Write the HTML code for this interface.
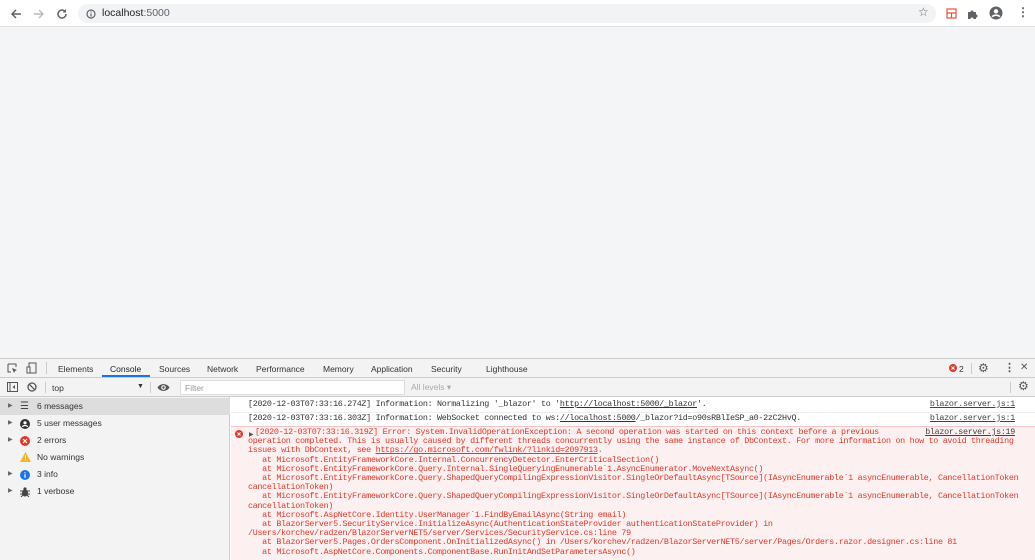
<!DOCTYPE html>
<html><head><style>
*{margin:0;padding:0;box-sizing:border-box}
body{width:1035px;height:559px;overflow:hidden;background:#f4f5f7;font-family:"Liberation Sans",sans-serif;position:relative}
.abs{position:absolute}
.top{left:0;top:0;width:1035px;height:27px;background:#fff;border-bottom:1px solid #e0e0e0}
.pill{left:78px;top:4px;width:858px;height:19px;background:#f1f3f4;border-radius:10px}
.dt{left:0;top:358px;width:1035px;height:201px;background:#fff;border-top:1px solid #ccc}
.tabs{left:0;top:0;width:1035px;height:19px;background:#f3f3f3;border-bottom:1px solid #ccc;font-size:8.5px;color:#333}
.tabs span{position:absolute;top:5px}
.tb{left:0;top:19px;width:1035px;height:19px;background:#f3f3f3;border-bottom:1px solid #ccc;font-size:8.5px;color:#333}
.side{left:0;top:38px;width:230px;height:163px;background:#f3f3f3;border-right:1px solid #ccc;font-size:8.5px;color:#333}
.side div{position:absolute;left:0;width:230px;height:17px;line-height:17px}
.side .t{position:absolute;left:8px;font-size:6px;color:#666}
.side .l{position:absolute;left:37px}
.mono{font-family:"Liberation Mono",monospace;font-size:8.4px;letter-spacing:-0.3px;white-space:pre;line-height:9.2px}
.row{position:absolute;left:231px;width:804px;border-bottom:1px solid #eee}
.err{background:#fdf0f0;color:#e0392b;border-top:1px solid #f6c5c5}
u{text-decoration:underline}
.src{position:absolute;right:20px;color:#444;text-indent:0}
</style></head><body>
<div class="abs top">
 <svg class="abs" style="left:10px;top:8px" width="12" height="12" viewBox="0 0 12 12"><path d="M11 6H2M6 2L2 6l4 4" stroke="#5f6368" stroke-width="1.5" fill="none"/></svg>
 <svg class="abs" style="left:33px;top:8px" width="12" height="12" viewBox="0 0 12 12"><path d="M1 6h9M6 2l4 4-4 4" stroke="#bbb" stroke-width="1.4" fill="none"/></svg>
 <svg class="abs" style="left:56px;top:8px" width="12" height="12" viewBox="0 0 12 12"><path d="M10 6a4 4 0 1 1-1.2-2.8" stroke="#5f6368" stroke-width="1.5" fill="none"/><path d="M10 1v3.5H6.5z" fill="#5f6368"/></svg>
</div>
<div class="abs pill">
 <svg class="abs" style="left:8px;top:5px" width="10" height="10" viewBox="0 0 10 10"><circle cx="5" cy="5" r="4" stroke="#5f6368" stroke-width="1.2" fill="none"/><path d="M5 4.5v3M5 2.5v1" stroke="#5f6368" stroke-width="1.2"/></svg>
 <span class="abs" style="left:24px;top:3px;font-size:10.5px;color:#202124">localhost<span style="color:#5f6368">:5000</span></span>
 <span class="abs" style="left:840px;top:1px;font-size:12px;color:#5f6368">☆</span>
</div>
<svg class="abs" style="left:946px;top:8px" width="11" height="11" viewBox="0 0 11 11"><rect x="1" y="1" width="9" height="9" stroke="#e8543b" stroke-width="1.2" fill="none"/><path d="M1 5h9M5.5 5v5" stroke="#e8543b" stroke-width="1.2"/></svg>
<svg class="abs" style="left:967px;top:8px" width="12" height="12" viewBox="0 0 12 12"><path d="M1 4h2.5a1.5 1.5 0 0 1 3 0H9v2.5a1.5 1.5 0 0 1 0 3V11H6.5a1.5 1.5 0 0 0-3 0H1z" fill="#5f6368"/></svg>
<svg class="abs" style="left:989px;top:6px" width="14" height="14" viewBox="0 0 14 14"><circle cx="7" cy="7" r="6.5" fill="#5f6368"/><circle cx="7" cy="5.3" r="2.2" fill="#fff"/><path d="M3.2 10.8c1.5-2.2 6.1-2.2 7.6 0" stroke="#fff" stroke-width="1.6" fill="none"/></svg>
<span class="abs" style="left:1017px;top:5px;font-size:12px;color:#5f6368;font-weight:bold">⋮</span>

<div class="abs dt">
 <div class="abs tabs">
  <svg class="abs" style="left:7px;top:4px" width="11" height="11" viewBox="0 0 11 11"><path d="M1 1h8v3M1 1v8h3" stroke="#555" fill="none"/><path d="M5 5l5 2-2 1-1 2z" fill="#555"/></svg>
  <svg class="abs" style="left:26px;top:3px" width="11" height="12" viewBox="0 0 11 12"><rect x="3" y="1" width="7" height="10" stroke="#555" fill="none"/><rect x="1" y="5" width="3" height="6" stroke="#555" fill="#fff"/></svg>
  <div class="abs" style="left:46px;top:3px;width:1px;height:12px;background:#ccc"></div>
  <span style="left:58px">Elements</span>
  <span style="left:110px;color:#222">Console</span>
  <div class="abs" style="left:102px;top:16px;width:48px;height:2px;background:#1a73e8"></div>
  <span style="left:159px">Sources</span>
  <span style="left:207px">Network</span>
  <span style="left:256px">Performance</span>
  <span style="left:323px">Memory</span>
  <span style="left:371px">Application</span>
  <span style="left:431px">Security</span>
  <span style="left:486px">Lighthouse</span>
  <svg class="abs" style="left:949px;top:5px" width="8" height="8" viewBox="0 0 8 8"><circle cx="4" cy="4" r="4" fill="#e0392b"/><path d="M2.5 2.5l3 3M5.5 2.5l-3 3" stroke="#fff" stroke-width="1"/></svg>
  <span style="left:959px">2</span>
  <div class="abs" style="left:971px;top:4px;width:1px;height:11px;background:#ccc"></div>
  <span style="left:978px;font-size:12px;top:2px;color:#555">⚙</span>
  <span style="left:1004px;font-size:11px;top:2px;color:#555;font-weight:bold">⋮</span>
  <span style="left:1020px;font-size:10px;top:3px;color:#555">✕</span>
 </div>
 <div class="abs tb">
  <svg class="abs" style="left:7px;top:4px" width="11" height="10" viewBox="0 0 11 10"><rect x=".5" y=".5" width="10" height="9" stroke="#555" fill="none"/><path d="M3 .5v9" stroke="#555"/><path d="M8 3L5.5 5 8 7z" fill="#555"/></svg>
  <svg class="abs" style="left:27px;top:4px" width="10" height="10" viewBox="0 0 10 10"><circle cx="5" cy="5" r="4" stroke="#555" stroke-width="1.3" fill="none"/><path d="M2.2 2.2l5.6 5.6" stroke="#555" stroke-width="1.3"/></svg>
  <div class="abs" style="left:45px;top:4px;width:1px;height:11px;background:#ccc"></div>
  <span class="abs" style="left:52px;top:5px">top</span>
  <span class="abs" style="left:137px;top:5px;font-size:7px">▼</span>
  <div class="abs" style="left:150px;top:4px;width:1px;height:11px;background:#ccc"></div>
  <svg class="abs" style="left:157px;top:5px" width="13" height="9" viewBox="0 0 13 9"><path d="M.5 4.5C3 0 10 0 12.5 4.5 10 9 3 9 .5 4.5z" fill="#555"/><circle cx="6.5" cy="4.5" r="2.3" fill="#fff"/><circle cx="6.5" cy="4.5" r="1.2" fill="#555"/></svg>
  <div class="abs" style="left:180px;top:2px;width:225px;height:15px;background:#fff;border:1px solid #ddd"></div>
  <span class="abs" style="left:185px;top:5px;color:#999">Filter</span>
  <span class="abs" style="left:411px;top:4px;color:#aaa">All levels ▾</span>
  <div class="abs" style="left:1010px;top:4px;width:1px;height:11px;background:#ccc"></div>
  <span class="abs" style="left:1018px;top:1px;font-size:12px;color:#555">⚙</span>
 </div>
 <div class="abs side">
  <div style="top:1px;background:#ddd"><span class="t">▶</span><span class="abs" style="left:20px;font-size:10px;color:#444">☰</span><span class="l">6 messages</span></div>
  <div style="top:18px"><span class="t">▶</span><svg class="abs" style="left:20px;top:4px" width="10" height="10" viewBox="0 0 10 10"><circle cx="5" cy="5" r="5" fill="#333"/><circle cx="5" cy="3.8" r="1.6" fill="#fff"/><path d="M2.3 7.8c1.2-1.7 4.2-1.7 5.4 0" stroke="#fff" stroke-width="1.3" fill="none"/></svg><span class="l">5 user messages</span></div>
  <div style="top:35px"><span class="t">▶</span><svg class="abs" style="left:20px;top:4px" width="10" height="10" viewBox="0 0 10 10"><circle cx="5" cy="5" r="5" fill="#e0392b"/><path d="M3 3l4 4M7 3l-4 4" stroke="#fff" stroke-width="1.2"/></svg><span class="l">2 errors</span></div>
  <div style="top:52px"><svg class="abs" style="left:20px;top:3px" width="11" height="10" viewBox="0 0 11 10"><path d="M5.5 0L11 10H0z" fill="#f2b423"/><path d="M5.5 3.5v3M5.5 7.5v1" stroke="#fff" stroke-width="1.1"/></svg><span class="l">No warnings</span></div>
  <div style="top:69px"><span class="t">▶</span><svg class="abs" style="left:20px;top:4px" width="10" height="10" viewBox="0 0 10 10"><circle cx="5" cy="5" r="5" fill="#1a73e8"/><path d="M5 4.3v3.5M5 2.2v1.1" stroke="#fff" stroke-width="1.3"/></svg><span class="l">3 info</span></div>
  <div style="top:86px"><span class="t">▶</span><svg class="abs" style="left:20px;top:4px" width="10" height="10" viewBox="0 0 10 10"><ellipse cx="5" cy="6" rx="3" ry="3.5" fill="#444"/><circle cx="5" cy="2" r="1.6" fill="#444"/><path d="M0 4h10M0 7h10M1 10l2-2M9 10L7 8" stroke="#444"/></svg><span class="l">1 verbose</span></div>
 </div>
 <div class="row mono" style="top:40px;height:14px;padding:1px 0 0 17px;color:#333">[2020-12-03T07:33:16.274Z] Information: Normalizing '_blazor' to '<u>http://localhost:5000/_blazor</u>'.<span class="src"><u>blazor.server.js:1</u></span></div>
 <div class="row mono" style="top:54px;height:14px;padding:1px 0 0 17px;color:#333">[2020-12-03T07:33:16.303Z] Information: WebSocket connected to ws:<u>//localhost:5000</u>/_blazor?id=o90sRBlIeSP_a0-2zC2HvQ.<span class="src"><u>blazor.server.js:1</u></span></div>
 <div class="row mono err" style="top:67px;height:134px;padding:1px 0 0 17px;border-bottom:none;text-indent:7px"><svg class="abs" style="left:4px;top:3px" width="8" height="8" viewBox="0 0 8 8"><circle cx="4" cy="4" r="4" fill="#e0392b"/><path d="M2.5 2.5l3 3M5.5 2.5l-3 3" stroke="#fff"/></svg><span style="position:absolute;left:18px;top:3px;color:#555;font-size:6px;text-indent:0">▶</span><span class="src"><u>blazor.server.js:19</u></span>[2020-12-03T07:33:16.319Z] Error: System.InvalidOperationException: A second operation was started on this context before a previous
operation completed. This is usually caused by different threads concurrently using the same instance of DbContext. For more information on how to avoid threading
issues with DbContext, see <u>https://go.microsoft.com/fwlink/?linkid=2097913</u>.
   at Microsoft.EntityFrameworkCore.Internal.ConcurrencyDetector.EnterCriticalSection()
   at Microsoft.EntityFrameworkCore.Query.Internal.SingleQueryingEnumerable`1.AsyncEnumerator.MoveNextAsync()
   at Microsoft.EntityFrameworkCore.Query.ShapedQueryCompilingExpressionVisitor.SingleOrDefaultAsync[TSource](IAsyncEnumerable`1 asyncEnumerable, CancellationToken
cancellationToken)
   at Microsoft.EntityFrameworkCore.Query.ShapedQueryCompilingExpressionVisitor.SingleOrDefaultAsync[TSource](IAsyncEnumerable`1 asyncEnumerable, CancellationToken
cancellationToken)
   at Microsoft.AspNetCore.Identity.UserManager`1.FindByEmailAsync(String email)
   at BlazorServer5.SecurityService.InitializeAsync(AuthenticationStateProvider authenticationStateProvider) in
/Users/korchev/radzen/BlazorServerNET5/server/Services/SecurityService.cs:line 79
   at BlazorServer5.Pages.OrdersComponent.OnInitializedAsync() in /Users/korchev/radzen/BlazorServerNET5/server/Pages/Orders.razor.designer.cs:line 81
   at Microsoft.AspNetCore.Components.ComponentBase.RunInitAndSetParametersAsync()</div>
</div>
</body></html>
